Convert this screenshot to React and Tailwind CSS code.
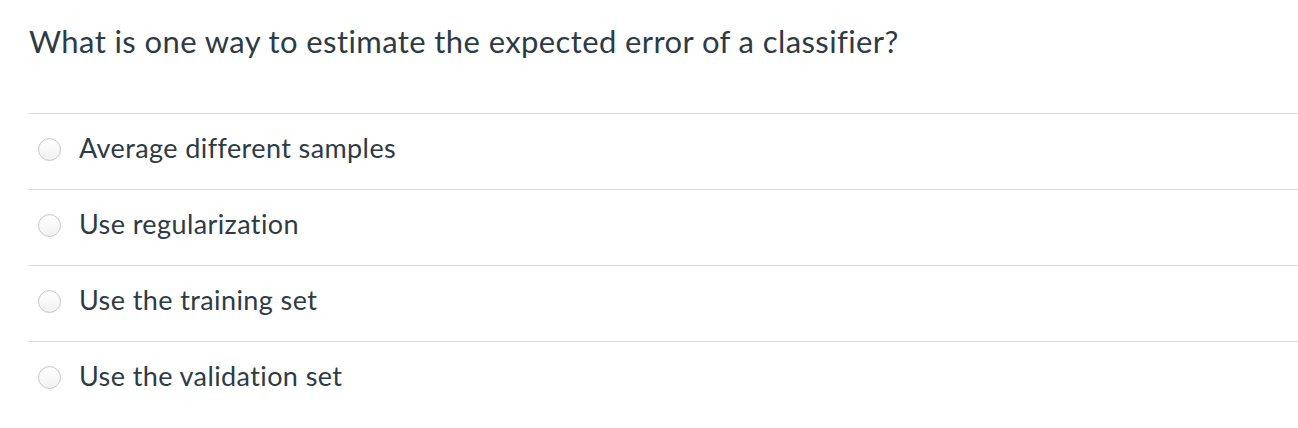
import React from "react";

const answers = [
  "Average different samples",
  "Use regularization",
  "Use the training set",
  "Use the validation set",
];

function Radio() {
  return (
    <span className="block w-[23px] h-[23px] shrink-0 rounded-full border border-[#c9c9c9] bg-gradient-to-b from-white to-[#f1f1f1] shadow-[inset_0_1px_1px_rgba(0,0,0,0.04)]" />
  );
}

export default function App() {
  return (
    <div className="min-h-screen bg-white pl-[28px] font-['Lato','Open_Sans',sans-serif] text-[#2d3b45]">
      {/* Question */}
      <div className="pt-[20px] pl-[1px] pb-[51px]">
        <p className="text-[31px] leading-[42px] tracking-[0.4px]">
          What is one way to estimate the expected error of a classifier?
        </p>
      </div>

      {/* Answers */}
      <div>
        {answers.map((a, i) => (
          <div
            key={i}
            className="flex items-center h-[76px] pb-[8px] border-t border-[#dddddd]"
          >
            <div className="ml-[10px] mr-[18px] mt-[4px]">
              <Radio />
            </div>
            <span className="text-[27px] leading-[36px] tracking-[0.4px]">{a}</span>
          </div>
        ))}
      </div>
    </div>
  );
}
